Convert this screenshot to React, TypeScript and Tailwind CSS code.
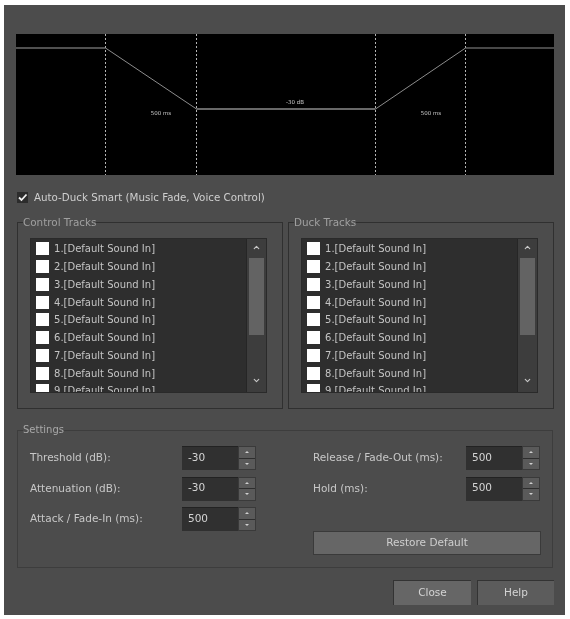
import { ChevronDown, ChevronUp } from "lucide-react";

const TRACKS = [1, 2, 3, 4, 5, 6, 7, 8, 9];

function Chart() {
  return (
    <svg viewBox="0 0 538 141" className="block w-[538px] h-[141px] bg-black">
      {[89.5, 180.5, 359.5, 449.5].map((x) => (
        <line key={x} x1={x} x2={x} y1="0" y2="141" stroke="#b4b4b4" strokeWidth="1" strokeDasharray="2 2" />
      ))}
      <polyline points="0,14 89.5,14" fill="none" stroke="#a0a0a0" strokeWidth="1" />
      <polyline points="89.5,14 180.5,75" fill="none" stroke="#8c8c8c" strokeWidth="1" />
      <polyline points="180.5,75 359.5,75" fill="none" stroke="#d0d0d0" strokeWidth="1" />
      <polyline points="359.5,75 449.5,14" fill="none" stroke="#8c8c8c" strokeWidth="1" />
      <polyline points="449.5,14 538,14" fill="none" stroke="#909090" strokeWidth="1" />
      <text x="145" y="81" textAnchor="middle" fill="#c8c8c8" fontSize="5.5" fontFamily="DejaVu Sans, sans-serif">500 ms</text>
      <text x="279" y="70" textAnchor="middle" fill="#c8c8c8" fontSize="5.5" fontFamily="DejaVu Sans, sans-serif">-30 dB</text>
      <text x="415" y="81" textAnchor="middle" fill="#c8c8c8" fontSize="5.5" fontFamily="DejaVu Sans, sans-serif">500 ms</text>
    </svg>
  );
}

function TrackList({ title }: { title: string }) {
  return (
    <fieldset className="h-[193px] w-[266px] border border-[#303030] px-[12px]">
      <legend className="-ml-[7px] text-[10.4px] leading-[12px] text-[#a0a0a0]">{title}</legend>
      <div className="mt-[10px] flex h-[155px] w-[237px] border border-[#2a2a2a] bg-[#2e2e2e]">
        <div className="flex-1 overflow-hidden pl-[5px] pt-[1px]">
          {TRACKS.map((n) => (
            <div key={n} className="flex h-[17.75px] items-center gap-[5px]">
              <span className="h-[13px] w-[13px] shrink-0 bg-white" />
              <span className="text-[10px] whitespace-nowrap text-[#c4c4c4]">{n}.[Default Sound In]</span>
            </div>
          ))}
        </div>
        <div className="flex w-[20px] flex-col items-center border-l border-[#262626] bg-[#3d3d3d] pt-[4px]">
          <ChevronUp size={9} strokeWidth={3} className="text-[#c8c8c8]" />
          <div className="mt-[6px] h-[77px] w-[15px] bg-[#636363]" />
          <ChevronDown size={9} strokeWidth={3} className="mt-auto mb-[7px] text-[#c8c8c8]" />
        </div>
      </div>
    </fieldset>
  );
}

function Spin({ value }: { value: string }) {
  return (
    <div className="flex h-[24px] w-[74px] shrink-0">
      <div className="flex w-[56px] items-center border-t border-[#222] bg-[#303030] pb-[2px] pl-[6px] text-[10.5px] text-[#d4d4d4]">
        {value}
      </div>
      <div className="flex w-[18px] flex-col gap-px border border-[#3a3a3a] bg-[#2e2e2e]">
        <div className="flex flex-1 items-center justify-center bg-[#5a5a5a] text-[#d0d0d0]">
          <span className="h-0 w-0 border-x-[2px] border-b-[2px] border-x-transparent border-b-current" />
        </div>
        <div className="flex flex-1 items-center justify-center bg-[#5a5a5a] text-[#d0d0d0]">
          <span className="h-0 w-0 border-x-[2px] border-t-[2px] border-x-transparent border-t-current" />
        </div>
      </div>
    </div>
  );
}

function Field({ label, value, width }: { label: string; value: string; width: string }) {
  return (
    <div className="flex items-center">
      <span className={`${width} text-[10.5px] text-[#c8c8c8]`}>{label}</span>
      <Spin value={value} />
    </div>
  );
}

export default function App() {
  return (
    <div className="h-[619px] w-[570px] overflow-hidden bg-white pl-[4px] pt-[5px] font-['DejaVu_Sans',sans-serif] blur-[0.6px]">
      <div className="flex h-[610px] w-[561px] flex-col bg-[#4c4c4c] pl-[12px] pt-[29px]">
        <Chart />
        <label className="mt-[14px] ml-[1px] flex h-[17px] items-center gap-[6px] text-[10.3px] text-[#cfcfcf]">
          <span className="flex h-[11px] w-[11px] items-center justify-center bg-[#2c2c2c]">
            <svg viewBox="0 0 11 11" className="h-[11px] w-[11px]">
              <path d="M2 5.5 L4.5 8 L9.5 2.5" fill="none" stroke="#f0f0f0" strokeWidth="1.8" />
            </svg>
          </span>
          Auto-Duck Smart (Music Fade, Voice Control)
        </label>
        <div className="mt-[10px] ml-[1px] flex gap-[5px]">
          <TrackList title="Control Tracks" />
          <TrackList title="Duck Tracks" />
        </div>
        <fieldset className="mt-[15px] ml-[1px] h-[144px] w-[536px] border border-[#3d3d3d] pl-[12px] pr-[11px]">
          <legend className="-ml-[7px] text-[10px] leading-[12px] text-[#a8a8a8]">Settings</legend>
          <div className="mt-[10px] flex justify-between">
            <div className="flex flex-col gap-[6.5px]">
              <Field label="Threshold (dB):" value="-30" width="w-[152px]" />
              <Field label="Attenuation (dB):" value="-30" width="w-[152px]" />
              <Field label="Attack / Fade-In (ms):" value="500" width="w-[152px]" />
            </div>
            <div className="flex w-[228px] flex-col gap-[6.5px]">
              <Field label="Release / Fade-Out (ms):" value="500" width="w-[153px]" />
              <Field label="Hold (ms):" value="500" width="w-[153px]" />
              <button className="mt-[24px] h-[24px] w-[228px] border border-[#3a3a3a] bg-[#666] text-[10.5px] text-[#cfcfcf]">
                Restore Default
              </button>
            </div>
          </div>
        </fieldset>
        <div className="mt-[12px] flex w-[538px] justify-end gap-[6px]">
          <button className="h-[25px] w-[78px] border-t border-l border-[#333] bg-[#666] text-[10.5px] text-[#d4d4d4]">Close</button>
          <button className="h-[25px] w-[77px] border-t border-l border-[#333] bg-[#5c5c5c] text-[10.5px] text-[#d4d4d4]">Help</button>
        </div>
      </div>
    </div>
  );
}
